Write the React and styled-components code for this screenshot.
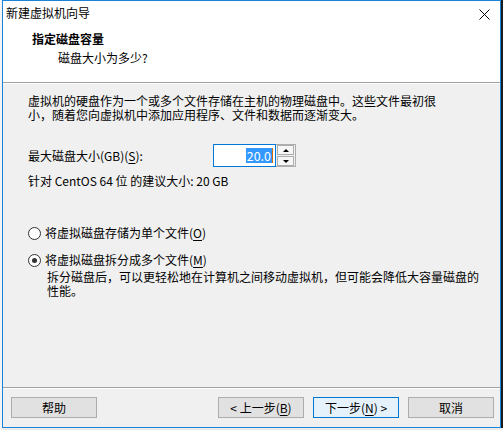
import React from "react";
import styled, { createGlobalStyle, css } from "styled-components";

const GlobalStyle = createGlobalStyle`
  html, body {
    margin: 0;
    padding: 0;
    background: #ececec;
  }
  body {
    font-family: "Noto Sans CJK SC", "Noto Sans", sans-serif;
    font-size: 12px;
    color: #000;
  }
`;

const Page = styled.div`
  display: flex;
  width: 503px;
  height: 430px;
  overflow: hidden;
`;

const LeftGap = styled.div`
  width: 2px;
  flex: 0 0 auto;
  background: #f4f4f4;
`;

const DarkEdge = styled.div`
  flex: 1 1 auto;
  height: 428px;
  background: #1c1c1c;
`;

const Window = styled.div`
  width: 497px;
  height: 426px;
  flex: 0 0 auto;
  border: 1px solid #1883d7;
  background: #f0f0f0;
  display: flex;
  flex-direction: column;
`;

const TopArea = styled.div`
  background: #fff;
  height: 81px;
  display: flex;
  flex-direction: column;
`;

const TitleBar = styled.div`
  height: 29px;
  display: flex;
  align-items: center;
  justify-content: space-between;
  padding: 0 10px 0 3px;
  line-height: 14px;
  margin-top: -3px;
`;

const CloseButton = styled.div`
  width: 11px;
  height: 11px;
  display: flex;
  margin-top: 3px;
`;

const HeaderTitle = styled.div`
  font-weight: bold;
  font-size: 12px;
  line-height: 15px;
  padding-left: 29px;
  margin-top: 4px;
`;

const HeaderSub = styled.div`
  line-height: 15px;
  padding-left: 55px;
  margin-top: 4px;
`;

const Separator = styled.div`
  height: 1px;
  background: #a0a0a0;
  border-bottom: 1px solid #fff;
  flex: 0 0 auto;
`;

const Body = styled.div`
  flex: 1 1 auto;
  padding: 10px 20px 0 25px;
  display: flex;
  flex-direction: column;
`;

const Paragraph = styled.div`
  line-height: 14px;
  padding-left: ${(p) => p.$indent || 0}px;
  margin-top: ${(p) => p.$top || 0}px;
`;

const SizeRow = styled.div`
  display: flex;
  align-items: center;
  margin-top: 22px;
  height: 23px;
`;

const SizeLabel = styled.div`
  width: 185px;
  line-height: 14px;
`;

const Spinner = styled.div`
  display: flex;
  height: 23px;
`;

const NumberBox = styled.div`
  width: 59px;
  height: 21px;
  border: 1px solid #0078d7;
  background: #fff;
  display: flex;
  align-items: center;
  justify-content: flex-end;
  padding-right: 2px;
`;

const Selected = styled.span`
  background: #3399ff;
  color: #fff;
  font-size: 12.5px;
  line-height: 15px;
  padding: 0 1px;
  border-right: 1px solid #d66a00;
`;

const SpinButtons = styled.div`
  width: 17px;
  height: 21px;
  border: 1px solid #adadad;
  border-left: none;
  background: #f0f0f0;
  display: flex;
  flex-direction: column;
  gap: 1px;
  padding: 0 1px;
  box-sizing: content-box;
`;

const SpinButton = styled.div`
  flex: 1 1 0;
  border: 1px solid #adadad;
  background: #f6f6f6;
  display: flex;
  align-items: center;
  justify-content: center;
`;

const Triangle = styled.div`
  width: 0;
  height: 0;
  border-left: 3px solid transparent;
  border-right: 3px solid transparent;
  ${(p) =>
    p.$down
      ? css`border-top: 3px solid #000;`
      : css`border-bottom: 3px solid #000;`}
`;

const RadioRow = styled.div`
  display: flex;
  align-items: center;
  gap: 4px;
  line-height: 14px;
  margin-top: ${(p) => p.$top}px;
`;

const RadioCircle = styled.span`
  width: 11px;
  height: 11px;
  border: 1px solid #333;
  border-radius: 50%;
  background: #fff;
  display: flex;
  align-items: center;
  justify-content: center;
  flex: 0 0 auto;
  &::after {
    content: "";
    display: ${(p) => (p.$checked ? "block" : "none")};
    width: 5px;
    height: 5px;
    border-radius: 50%;
    background: #333;
  }
`;

const Key = styled.span`
  text-decoration: underline;
  text-underline-offset: 2px;
`;

const Footer = styled.div`
  height: 38px;
  display: flex;
  align-items: center;
  padding: 0 6px 0 8px;
  gap: 9px;
`;

const Spacer = styled.div`
  flex: 1 1 auto;
`;

const Button = styled.div`
  width: 84px;
  height: 19px;
  border: 1px solid ${(p) => (p.$default ? "#0078d7" : "#adadad")};
  background: ${(p) => (p.$default ? "#e5f1fb" : "#e1e1e1")};
  display: flex;
  align-items: center;
  justify-content: center;
  line-height: 14px;
  margin-top: -1px;
`;

export default function App() {
  return (
    <>
      <GlobalStyle />
      <Page>
        <LeftGap />
        <Window>
          <TopArea>
            <TitleBar>
              <span>新建虚拟机向导</span>
              <CloseButton>
                <svg width="11" height="11" viewBox="0 0 11 11">
                  <path d="M0.5 0.5 L10.5 10.5 M10.5 0.5 L0.5 10.5" stroke="#000" strokeWidth="1" />
                </svg>
              </CloseButton>
            </TitleBar>
            <HeaderTitle>指定磁盘容量</HeaderTitle>
            <HeaderSub>磁盘大小为多少?</HeaderSub>
          </TopArea>
          <Separator />
          <Body>
            <Paragraph>
              虚拟机的硬盘作为一个或多个文件存储在主机的物理磁盘中。这些文件最初很
              <br />
              小，随着您向虚拟机中添加应用程序、文件和数据而逐渐变大。
            </Paragraph>
            <SizeRow>
              <SizeLabel>
                最大磁盘大小(GB)(<Key>S</Key>):
              </SizeLabel>
              <Spinner>
                <NumberBox>
                  <Selected>20.0</Selected>
                </NumberBox>
                <SpinButtons>
                  <SpinButton>
                    <Triangle />
                  </SpinButton>
                  <SpinButton>
                    <Triangle $down />
                  </SpinButton>
                </SpinButtons>
              </Spinner>
            </SizeRow>
            <Paragraph $top={7}>针对 CentOS 64 位 的建议大小: 20 GB</Paragraph>
            <RadioRow $top={38}>
              <RadioCircle />
              <span>
                将虚拟磁盘存储为单个文件(<Key>O</Key>)
              </span>
            </RadioRow>
            <RadioRow $top={13}>
              <RadioCircle $checked />
              <span>
                将虚拟磁盘拆分成多个文件(<Key>M</Key>)
              </span>
            </RadioRow>
            <Paragraph $indent={19} $top={3}>
              拆分磁盘后，可以更轻松地在计算机之间移动虚拟机，但可能会降低大容量磁盘的
              <br />
              性能。
            </Paragraph>
          </Body>
          <Separator />
          <Footer>
            <Button>帮助</Button>
            <Spacer />
            <Button>
              &lt; 上一步(<Key>B</Key>)
            </Button>
            <Button $default>
              下一步(<Key>N</Key>) &gt;
            </Button>
            <Button>取消</Button>
          </Footer>
        </Window>
        <DarkEdge />
      </Page>
    </>
  );
}
